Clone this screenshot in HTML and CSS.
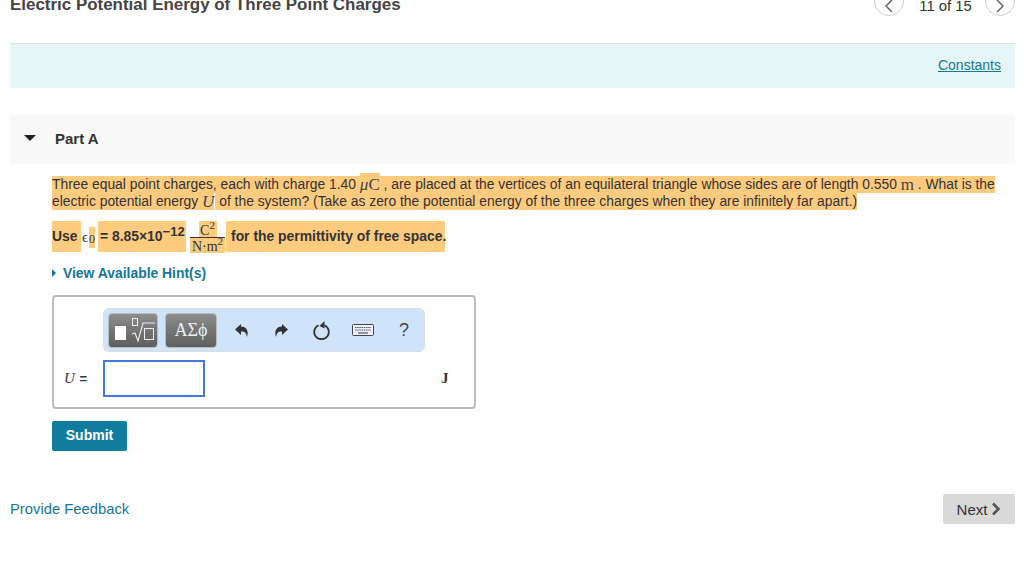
FILE: index.html
```html
<!DOCTYPE html>
<html lang="en">
<head>
<meta charset="utf-8">
<title>Electric Potential Energy of Three Point Charges</title>
<link rel="stylesheet" href="styles.css">
</head>
<body>
<header class="top">
  <h1 class="title">Electric Potential Energy of Three Point Charges</h1>
  <nav class="pager">
    <span class="circle"><svg width="10" height="14" viewBox="0 0 10 14"><path d="M8 1 2 7l6 6" fill="none" stroke="#666" stroke-width="1.5"/></svg></span>
    <span class="count">11 of 15</span>
    <span class="circle"><svg width="10" height="14" viewBox="0 0 10 14"><path d="m2 1 6 6-6 6" fill="none" stroke="#666" stroke-width="1.5"/></svg></span>
  </nav>
</header>
<div class="band"><a class="link" href="#">Constants</a></div>
<div class="part"><span class="caret"></span><span class="part-name">Part A</span></div>
<main class="content">
  <div class="line">
    <span class="hl">Three equal point charges, each with charge 1.40 </span><span class="hl math tall"><i>μ</i>C</span><span class="hl"> , are placed at the vertices of an equilateral triangle whose sides are of length 0.550 </span><span class="hl math">m</span><span class="hl"> . What is the</span>
  </div>
  <div class="line">
    <span class="hl">electric potential energy </span><span class="hl math gap-r"><i>U</i></span><span class="hl"> of the system? (Take as zero the potential energy of the three charges when they are infinitely far apart.)</span>
  </div>
  <div class="use">
    <span class="bar use-word">Use</span>
    <span class="eps">ϵ<span class="sub">0</span></span>
    <span class="bar num"><span>= 8.85×10<sup class="exp">−12</sup></span></span>
    <span class="frac"><span class="fn"><span class="fn-in">C<sup>2</sup></span></span><span class="fd">N·m<sup>2</sup></span></span>
    <span class="bar rest">for the permittivity of free space.</span>
  </div>
  <a class="hints" href="#"><span class="tri"></span>View Available Hint(s)</a>
  <section class="answer">
    <div class="toolbar">
      <span class="tbtn wide">
        <svg width="48" height="33" viewBox="0 0 48 33"><rect x="6" y="12" width="11" height="14" fill="#fff"/><rect x="23.500" y="4.500" width="5" height="7" fill="none" stroke="#eee"/><path d="M23 20l3-1 3 8 5-18h12" fill="none" stroke="#eee" stroke-width="1.100"/><rect x="35.500" y="14.500" width="9" height="11" fill="none" stroke="#eee"/></svg>
      </span>
      <span class="tbtn greek">ΑΣϕ</span>
      <span class="tools">
        <svg class="tool" width="15" height="15" viewBox="0 0 15 15"><path d="M7 1 1 6.500 7 12V8.500c3-.3 5 .5 6 5.500 2-6-.5-10.500-6-10.500z" fill="#333"/></svg>
        <svg class="tool t-redo" width="15" height="15" viewBox="0 0 15 15"><path d="m8 1 6 5.500L8 12V8.500c-3-.3-5 .5-6 5.500-2-6 .5-10.500 6-10.500z" fill="#333"/></svg>
        <svg class="tool t-reload" width="19" height="20" viewBox="0 0 19 20"><path d="M6.500 5.300a7.300 7.300 0 1 0 6 0" fill="none" stroke="#333" stroke-width="1.800"/><path d="M12.500 1v7.500L7.500 6z" fill="#333"/></svg>
        <svg class="tool t-keys" width="22" height="14" viewBox="0 0 22 14"><rect x=".5" y="1.500" width="21" height="11" rx="1" fill="#eef" stroke="#444"/><path d="M3 4.500h16M3 7h16" stroke="#555" stroke-dasharray="1.500 .7"/><path d="M6 10h10" stroke="#555" stroke-width="1.200"/></svg>
        <span class="help">?</span>
      </span>
    </div>
    <div class="row">
      <span class="var"><i>U</i> <span class="eq">=</span></span>
      <span class="input"></span>
      <span class="unit">J</span>
    </div>
  </section>
  <button class="submit">Submit</button>
</main>
<footer class="foot">
  <a class="feedback" href="#">Provide Feedback</a>
  <button class="next">Next <svg width="10" height="14" viewBox="0 0 10 14"><path d="M2 1.500l5.500 5.500L2 12.500" fill="none" stroke="#555" stroke-width="2.600"/></svg></button>
</footer>
</body>
</html>
```
FILE: styles.css
```css
* { box-sizing: border-box; }
html, body { margin: 0; height: 578px; overflow: hidden; background: #fff; }
body { padding: 0 9px 0 10px; font-family: "Liberation Sans", Arial, sans-serif; color: #333; }
a { text-decoration: none; }

.top { height: 44px; display: flex; justify-content: space-between; border-bottom: 1px solid #ddd; overflow: hidden; }
.title { margin: -5px 0 0; font-size: 16.95px; line-height: 20px; font-weight: bold; color: #444; white-space: nowrap; }
.pager { display: flex; align-items: flex-start; margin-top: -14px; margin-right: -9px; padding-right: 9px; }
.circle { width: 30px; height: 30px; border: 1px solid #ccc; border-radius: 50%; display: flex; align-items: center; justify-content: center; padding-top: 9px; }
.count { width: 81px; padding-left: 2px; text-align: center; font-size: 14.8px; line-height: 16px; margin-top: 12px; color: #333; }

.band { height: 44px; background: #e6f6f6; display: flex; justify-content: flex-end; align-items: center; padding: 0 14px 3px 0; }
.link { font-size: 14px; color: #14789c; text-decoration: underline; }

.part { margin-top: 27px; height: 49px; background: #f9f9f9; display: flex; align-items: center; padding: 0 0 3px 14px; }
.caret { width: 0; height: 0; border: 6px solid transparent; border-top: 6px solid #222; border-bottom: 0; margin-right: 19px; }
.part-name { font-size: 15px; font-weight: bold; color: #333; }

.content { padding-left: 42px; }
.line { display: flex; font-size: 13.85px; line-height: 17px; height: 17px; white-space: pre; color: #333; }
.line:first-child { margin-top: 12px; }
.hl { background: #fecb7f; display: block; }
.math { font-family: "Liberation Serif", serif; font-size: 17px; color: #444; }
.tall { margin-top: -3px; height: 21px; padding-top: 3px; }
.gap-r { margin-right: 1px; }

.use { display: flex; height: 31px; margin-top: 11px; font-size: 13.9px; font-weight: bold; color: #333; }
.bar { background: #fecb7f; display: flex; align-items: center; white-space: pre; padding-bottom: 1px; }
.use-word { width: 29px; }
.eps { font-family: "Liberation Serif", serif; font-weight: normal; font-size: 15px; margin: 6px 3px 4px 0; width: 14px; display: flex; align-items: center; padding-left: 1px; }
.sub { background: #fecb7f; font-size: 12px; align-self: stretch; display: flex; align-items: flex-end; padding: 0 0 1px; margin-left: 1px; flex: 1; justify-content: center; }
.num { width: 88px; padding-left: 2px; }
.exp { font-size: 13px; line-height: 0; vertical-align: 5px; }
.frac { display: flex; flex-direction: column; align-items: center; width: 35px; margin: 0 1px 0 4px; font-family: "Liberation Serif", serif; font-weight: normal; font-size: 14px; color: #333; }
.fn { height: 17px; line-height: 22px; width: 35px; text-align: center; border-bottom: 1px solid #333; }
.fn-in { background: #fecb7f; display: block; width: 18px; height: 16px; line-height: 20px; margin: 0 auto; }
.fd { background: #fecb7f; height: 15px; line-height: 18px; white-space: nowrap; width: 35px; text-align: center; }
.fn sup, .fd sup { font-size: 11px; line-height: 0; }
.rest { width: 219px; padding-left: 5px; }

.hints { display: flex; align-items: center; margin-top: 13px; height: 16px; font-size: 13.9px; font-weight: bold; color: #14789c; }
.tri { width: 0; height: 0; border-left: 4px solid #14789c; border-top: 4px solid transparent; border-bottom: 4px solid transparent; margin-right: 7px; }

.answer { width: 424px; height: 114px; margin-top: 14px; border: 2px solid #bdbdbd; border-radius: 4px; padding: 11px 0 0 49px; }
.toolbar { width: 322px; height: 44px; display: flex; align-items: center; gap: 7px; padding: 0 0 0 4px; background: #cfe4fb; border: 1px solid #ddd; border-radius: 6px; }
.tbtn { height: 35px; display: flex; align-items: center; justify-content: center; border-radius: 4px; color: #fff; background: linear-gradient(#8c8c8c, #5e5e5e); border: 1px solid #bbb; }
.wide { width: 50px; }
.greek { width: 52px; font-family: "Liberation Serif", serif; font-size: 18px; color: #eee; }
.tools { flex: 1; display: flex; align-items: center; padding-left: 10px; }
.t-redo { margin-left: 25px; }
.t-reload { margin-left: 23px; }
.t-keys { margin-left: 21px; }
.help { margin-left: 25px; font-size: 18px; color: #444; }

.row { display: flex; align-items: center; height: 38px; margin: 7px 0 0 -39px; }
.var { width: 39px; font-family: "Liberation Serif", serif; font-size: 15px; color: #333; }
.eq { font-family: "Liberation Sans", sans-serif; font-size: 13px; font-weight: bold; margin-left: 1px; }
.input { width: 102px; height: 37px; border: 2px solid #4378e0; background: #fff; }
.unit { margin-left: 236px; font-family: "Liberation Serif", serif; font-weight: bold; font-size: 15px; color: #333; }

.submit { display: block; width: 75px; height: 30px; margin-top: 12px; border: 0; border-radius: 2px; background: #127c9e; color: #fff; font: bold 14px "Liberation Sans", Arial, sans-serif; padding: 0 0 2px; }

.foot { display: flex; justify-content: space-between; align-items: center; height: 30px; margin-top: 43px; }
.feedback { font-size: 14.8px; color: #14789c; }
.next { width: 72px; height: 30px; border: 0; border-radius: 2px; background: #d9d9d9; color: #333; font: 15px "Liberation Sans", Arial, sans-serif; display: flex; align-items: center; justify-content: center; gap: 4px; padding: 0; }
```
